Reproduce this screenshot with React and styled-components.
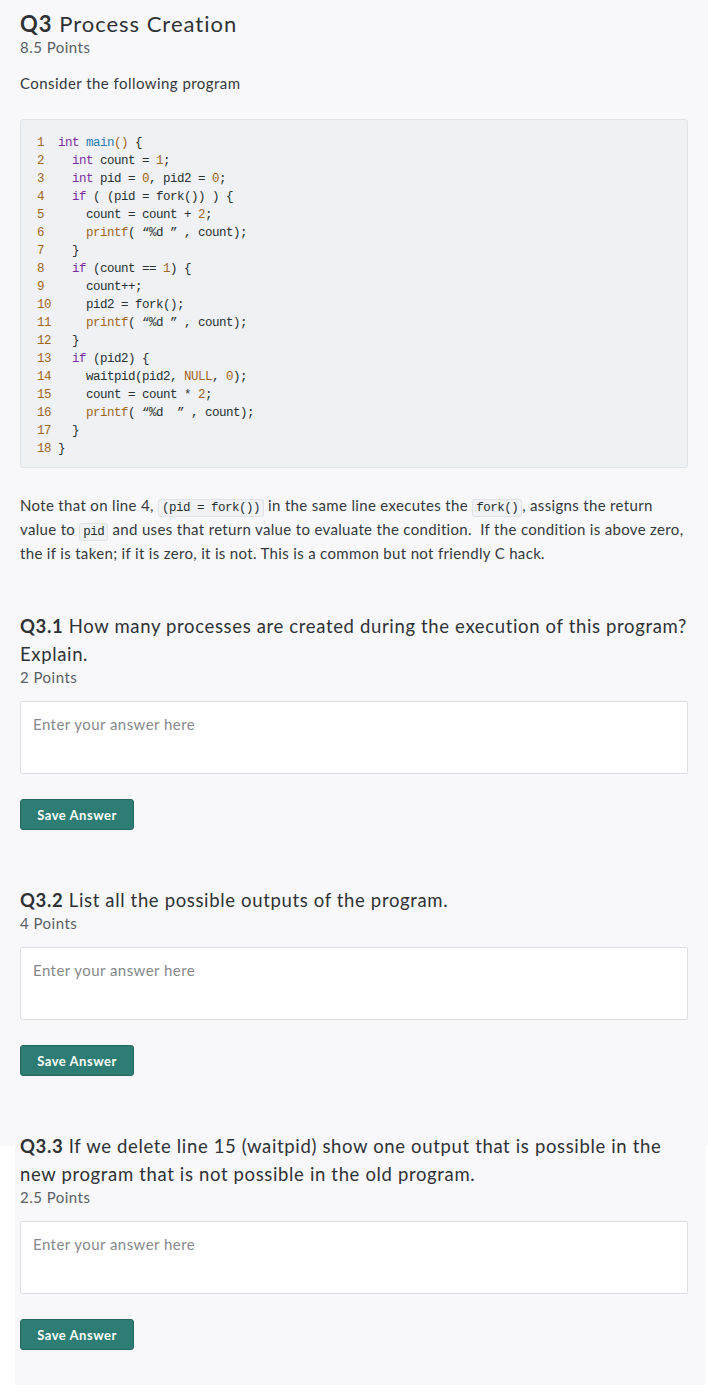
import React from 'react';
import styled, { createGlobalStyle } from 'styled-components';

const GlobalStyle = createGlobalStyle`
  body {
    margin: 0;
    background: #ffffff;
    font-family: Lato, "Open Sans", sans-serif;
    letter-spacing: 0.03em;
    color: #2f3235;
  }
`;

const Sheet = styled.div`
  background: #f8f8fb;
  padding: ${({ $top }) => $top || 0}px 20px ${({ $bottom }) => $bottom || 0}px 20px;
`;

const LowerSheet = styled.div`
  background: #f8f8fb;
  margin-left: 15px;
  width: 690px;
  box-sizing: border-box;
  padding: 0 17px 35px 5px;
`;

const Title = styled.h1`
  margin: 0;
  font-size: 22px;
  line-height: 28px;
  font-weight: 400;
  letter-spacing: 0.045em;
  color: #2f3235;
  b {
    font-weight: 700;
  }
`;

const QuestionTitle = styled.h2`
  margin: ${({ $top }) => $top}px 0 0;
  font-size: 18.5px;
  line-height: 28px;
  font-weight: 400;
  letter-spacing: 0.035em;
  color: #2f3235;
  b {
    font-weight: 700;
  }
`;

const Points = styled.div`
  font-size: 15px;
  line-height: 20px;
  color: #5b5e63;
  margin-top: -1px;
`;

const Text = styled.p`
  margin: ${({ $top }) => $top}px 0 0;
  font-size: 15px;
  line-height: 24px;
  letter-spacing: ${({ $tight }) => ($tight ? '0.022em' : '0.03em')};
  color: #35383c;
`;

const CodeBlock = styled.pre`
  margin: 24px 0 0;
  background: #f0f1f5;
  border: 1px solid #e2e3e9;
  border-radius: 3px;
  padding: 14px 16px 9px;
  font-family: "Liberation Mono", "DejaVu Sans Mono", monospace;
  font-size: 12.5px;
  letter-spacing: -0.5px;
  line-height: 18px;
  color: #263030;
`;

const CodeLine = styled.div`
  display: flex;
  white-space: pre;
`;

const LineNo = styled.span`
  width: 21px;
  flex: none;
  color: #a0661b;
`;

const Kw = styled.span`
  color: #7a2d9e;
`;

const Fn = styled.span`
  color: #2a7bb0;
`;

const Lit = styled.span`
  color: #a0661b;
`;

const InlineCode = styled.code`
  font-family: "Liberation Mono", "DejaVu Sans Mono", monospace;
  font-size: 12.5px;
  line-height: 16px;
  letter-spacing: -0.5px;
  background: #f1f2f5;
  border: 1px solid #e1e2e7;
  border-radius: 3px;
  padding: 1px 3px;
  color: #263030;
`;

const AnswerBox = styled.textarea`
  display: block;
  margin-top: 14px;
  width: 100%;
  height: 73px;
  box-sizing: border-box;
  resize: none;
  background: #ffffff;
  border: 1px solid #dddde4;
  border-radius: 2px;
  padding: 12px 12px;
  font-family: Lato, "Open Sans", sans-serif;
  font-size: 15px;
  letter-spacing: 0.03em;
  line-height: 20px;
  color: #333;
  &::placeholder {
    color: #86888c;
  }
`;

const SaveButton = styled.button`
  display: block;
  margin-top: 25px;
  width: 114px;
  height: 31px;
  background: #2e7d74;
  border: 1px solid #24685f;
  border-radius: 3px;
  color: #ffffff;
  font-family: Lato, "Open Sans", sans-serif;
  font-size: 13px;
  font-weight: 700;
  letter-spacing: 0.04em;
  padding: 0;
  cursor: pointer;
`;

const code = [
  [<Kw>int</Kw>, ' ', <Fn>main</Fn>, <Lit>()</Lit>, ' {'],
  ['  ', <Kw>int</Kw>, ' count = ', <Lit>1</Lit>, ';'],
  ['  ', <Kw>int</Kw>, ' pid = ', <Lit>0</Lit>, ', pid2 = ', <Lit>0</Lit>, ';'],
  ['  ', <Kw>if</Kw>, ' ( (pid = fork()) ) {'],
  ['    count = count + ', <Lit>2</Lit>, ';'],
  ['    ', <Lit>printf</Lit>, '( “%d ” , count);'],
  ['  }'],
  ['  ', <Kw>if</Kw>, ' (count == ', <Lit>1</Lit>, ') {'],
  ['    count++;'],
  ['    pid2 = fork();'],
  ['    ', <Lit>printf</Lit>, '( “%d ” , count);'],
  ['  }'],
  ['  ', <Kw>if</Kw>, ' (pid2) {'],
  ['    waitpid(pid2, ', <Lit>NULL</Lit>, ', ', <Lit>0</Lit>, ');'],
  ['    count = count * ', <Lit>2</Lit>, ';'],
  ['    ', <Lit>printf</Lit>, '( “%d  ” , count);'],
  ['  }'],
  ['}'],
];

const Question = ({ num, title, points, top }) => (
  <>
    <QuestionTitle $top={top}>
      <b>{num}</b> {title}
    </QuestionTitle>
    <Points>{points}</Points>
    <AnswerBox placeholder="Enter your answer here" />
    <SaveButton>Save Answer</SaveButton>
  </>
);

const App = () => {
  return (
    <>
      <GlobalStyle />
      <Sheet $top={10} $bottom={70}>
        <Title>
          <b>Q3</b> Process Creation
        </Title>
        <Points>8.5 Points</Points>
        <Text $top={14}>Consider the following program</Text>
        <CodeBlock>
          {code.map((parts, i) => (
            <CodeLine key={i}>
              <LineNo>{i + 1}</LineNo>
              <span>
                {parts.map((p, j) => (
                  <React.Fragment key={j}>{p}</React.Fragment>
                ))}
              </span>
            </CodeLine>
          ))}
        </CodeBlock>
        <Text $top={25} $tight>
          Note that on line 4, <InlineCode>(pid = fork())</InlineCode> in the same line executes the{' '}
          <InlineCode>fork()</InlineCode>, assigns the return value to <InlineCode>pid</InlineCode> and
          uses that return value to evaluate the condition.&nbsp; If the condition is above zero, the if
          is taken; if it is zero, it is not. This is a common but not friendly C hack.
        </Text>
        <Question
          top={47}
          num="Q3.1"
          title="How many processes are created during the execution of this program? Explain."
          points="2 Points"
        />
        <Question
          top={56}
          num="Q3.2"
          title="List all the possible outputs of the program."
          points="4 Points"
        />
      </Sheet>
      <LowerSheet>
        <Question
          top={-14}
          num="Q3.3"
          title="If we delete line 15 (waitpid) show one output that is possible in the new program that is not possible in the old program."
          points="2.5 Points"
        />
      </LowerSheet>
    </>
  );
};

export default App;
